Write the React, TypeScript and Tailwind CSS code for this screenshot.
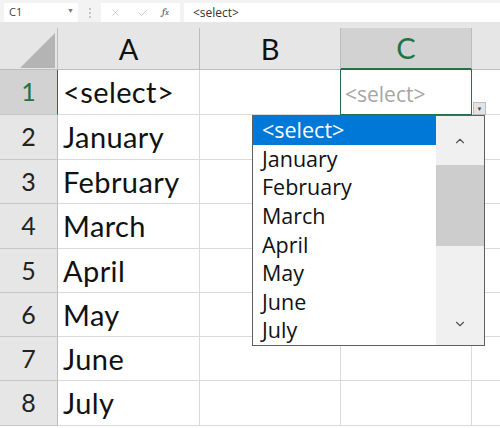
import { X, Check, ChevronUp, ChevronDown } from "lucide-react";

const months = ["<select>", "January", "February", "March", "April", "May", "June", "July"];
const rowHeights = ["h-[45px]", "h-[45px]", "h-[44px]", "h-[45px]", "h-[44px]", "h-[44px]", "h-[44px]", "h-[45px]"];

const font = { fontFamily: "Lato, 'Open Sans', sans-serif" };

function FormulaBar() {
    return (
        <div className="flex h-[22px] items-start bg-[#f3f3f3] pt-[3px]">
            <div className="ml-[4px] flex h-[19px] w-[74px] items-center justify-between bg-white pl-[5px] pr-[4px] text-[11px] text-[#444]">
                <span>C1</span>
                <span className="mb-[2px] text-[7px] text-[#777]">▼</span>
            </div>
            <div className="ml-[9px] flex h-[19px] w-[6px] flex-col items-center justify-center gap-[2px]">
                <span className="h-[2px] w-[2px] bg-[#c6c6c6]" />
                <span className="h-[2px] w-[2px] bg-[#c6c6c6]" />
                <span className="h-[2px] w-[2px] bg-[#c6c6c6]" />
            </div>
            <div className="ml-[8px] flex h-[19px] w-[79px] items-center bg-white pl-[9px]">
                <X className="h-[11px] w-[11px] text-[#b8b8b8]" strokeWidth={1.5} />
                <Check className="ml-[16px] h-[12px] w-[12px] text-[#b8b8b8]" strokeWidth={1.5} />
                <span className="ml-[13px] font-serif text-[11px] italic text-[#555]">
                    f<span className="text-[8px]">x</span>
                </span>
            </div>
            <div className="ml-[4px] flex h-[19px] flex-1 items-center bg-white pl-[9px] text-[12px] text-[#333]">
                &lt;select&gt;
            </div>
        </div>
    );
}

export default function App() {
    return (
        <div className="relative h-[428px] w-[500px] overflow-hidden bg-white" style={{ fontFamily: "'Segoe UI', 'Open Sans', sans-serif" }}>
            <FormulaBar />
            <div className="h-[6px] bg-[#e6e6e6]" />
            <div className="grid grid-cols-[58px_142px_141px_131px_1fr]" style={font}>
                {/* header row */}
                <div className="relative h-[42px] border-b border-r border-[#bcbcbc] bg-[#e6e6e6]">
                    <svg className="absolute left-[20px] top-[5px]" width="35" height="35" viewBox="0 0 35 35">
                        <polygon points="35,0 35,35 0,35" fill="#b4b4b4" />
                    </svg>
                </div>
                <div className="flex h-[42px] items-center justify-center border-b border-r border-[#bcbcbc] bg-[#e6e6e6] text-[29px] text-[#111]">A</div>
                <div className="flex h-[42px] items-center justify-center border-b border-r border-[#bcbcbc] bg-[#e6e6e6] text-[29px] text-[#111]">B</div>
                <div className="flex h-[42px] items-center justify-center border-b-2 border-r border-b-[#217346] border-r-[#bcbcbc] bg-[#d2d2d2] text-[29px] text-[#217346]">C</div>
                <div className="h-[42px] border-b border-[#bcbcbc] bg-[#e6e6e6]" />

                {months.map((m, i) => (
                    <Row key={i} index={i} label={m} height={rowHeights[i]} />
                ))}
            </div>

            {/* validation dropdown */}
            <div className="absolute left-[252px] top-[115px] flex h-[231px] w-[233px] border border-[#5f5f5f] bg-white" style={{ fontFamily: "'Open Sans', sans-serif" }}>
                <div className="flex w-[183px] flex-col">
                    {months.map((m, i) => (
                        <div
                            key={m}
                            className={
                                i === 0
                                    ? "flex h-[28.6px] items-center bg-[#0078d7] pl-[9px] text-[21.5px] text-white"
                                    : "flex h-[28.6px] items-center pl-[9px] text-[21.5px] text-[#111]"
                            }
                        >
                            {m}
                        </div>
                    ))}
                </div>
                <div className="flex flex-1 flex-col bg-[#f0f0f0]">
                    <div className="flex h-[49px] items-center justify-center">
                        <ChevronUp className="h-[14px] w-[14px] text-[#555]" strokeWidth={2} />
                    </div>
                    <div className="h-[81px] bg-[#cdcdcd]" />
                    <div className="flex flex-1 items-end justify-center pb-[14px]">
                        <ChevronDown className="h-[14px] w-[14px] text-[#555]" strokeWidth={2} />
                    </div>
                </div>
            </div>
        </div>
    );
}

function Row({ index, label, height }: { index: number; label: string; height: string }) {
    const selected = index === 0;
    return (
        <>
            <div
                className={
                    selected
                        ? `flex ${height} items-center justify-center border-b border-r border-b-[#c8c8c8] border-r-[#217346] bg-[#d2d2d2] text-[25px] text-[#217346]`
                        : `flex ${height} items-center justify-center border-b border-r border-b-[#c8c8c8] border-r-[#bcbcbc] bg-[#e6e6e6] text-[25px] text-[#222]`
                }
            >
                {index + 1}
            </div>
            <div className={`flex ${height} items-center border-b border-r border-[#dadada] pl-[5px] text-[29px] tracking-[0.4px] text-[#111]`}>{label}</div>
            <div className={`${height} border-b border-r border-[#dadada]`} />
            {selected ? (
                <div className={`relative flex ${height} items-center pl-[4px] pt-[4px] text-[21px] text-[#a6a6a6]`}>
                    <div className="absolute -left-px -top-px bottom-0 right-0 border border-[#217346]" />
                    <span style={{ fontFamily: "'Open Sans', sans-serif" }}>&lt;select&gt;</span>
                    <div className="absolute -right-[14px] bottom-0 flex h-[13px] w-[13px] items-center justify-center border border-[#bdbdbd] bg-[#e3e3e3]">
                        <span className="text-[6px] text-[#444]">▼</span>
                    </div>
                </div>
            ) : (
                <div className={`${height} border-b border-r border-[#dadada]`} />
            )}
            <div className={`${height} border-b border-[#dadada]`} />
        </>
    );
}
